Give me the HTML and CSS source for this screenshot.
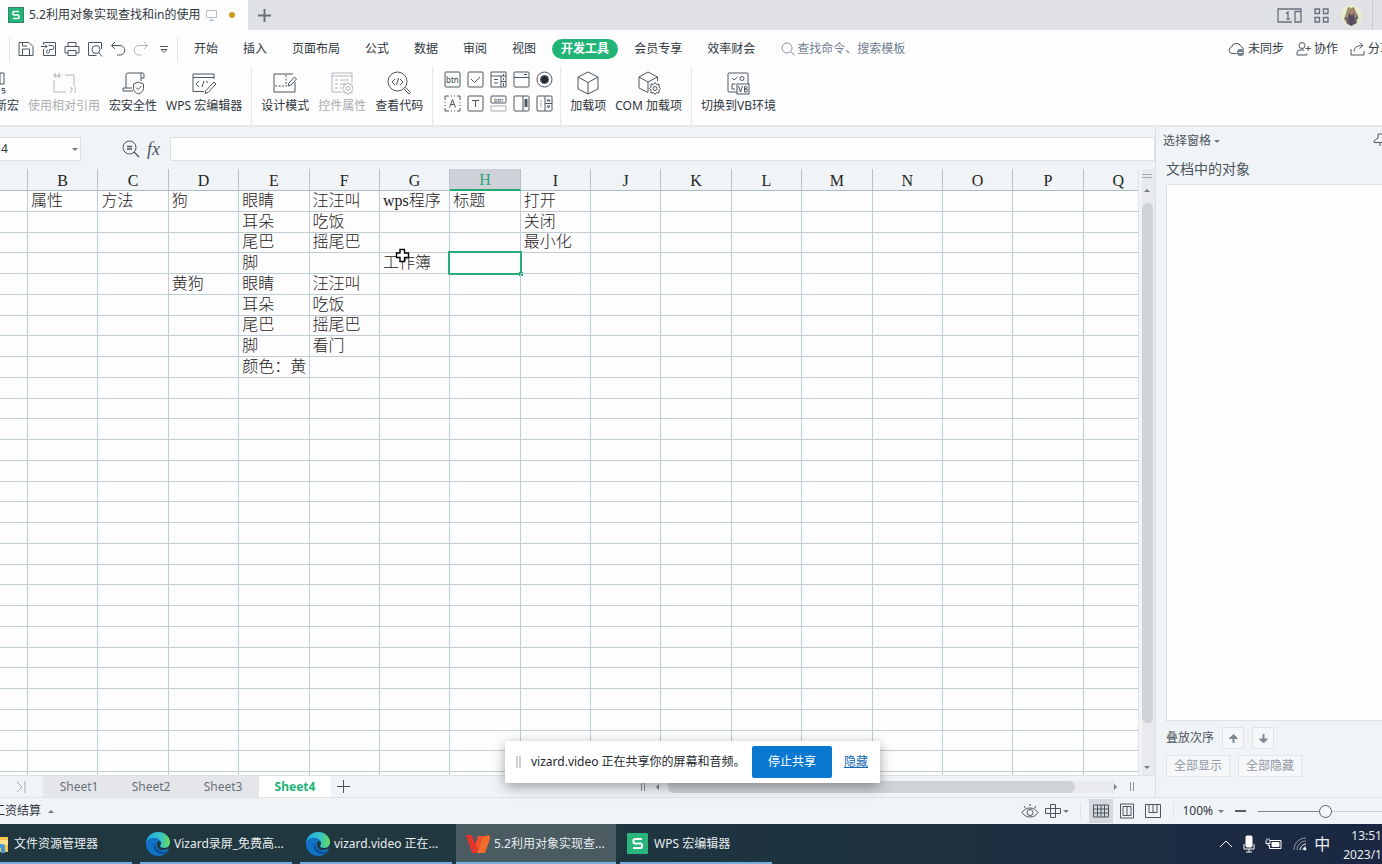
FILE: index.html
```html
<!DOCTYPE html>
<html lang="zh-CN">

<head>
    <meta charset="UTF-8">
    <meta name="viewport" content="width=device-width, initial-scale=1.0">
    <title>5.2利用对象实现查找和in的使用</title>
    <link rel="stylesheet" href="styles.css">
</head>

<body>
    <header class="titlebar">
        <div class="doc-tab">
            <svg width="16" height="16" viewBox="0 0 16 16"><rect width="16" height="16" rx="1" fill="#20b477"/><path d="M11 4.5H6a1 1 0 0 0-1 1V7a1 1 0 0 0 1 1h4a1 1 0 0 1 1 1v1.500a1 1 0 0 1-1 1H5" fill="none" stroke="#fff" stroke-width="1.500"/></svg>
            <span>5.2利用对象实现查找和in的使用</span>
            <svg class="pale" width="13" height="13" viewBox="0 0 13 13"><path d="M1.500 1.500h10v7h-10zM6.500 8.500v3M4 11.500h5"/></svg>
            <i class="dot"></i>
        </div>
        <button class="new-tab" aria-label="新建"><svg width="13" height="13" viewBox="0 0 13 13"><path d="M6.500 0v13M0 6.500h13" stroke-width="2"/></svg></button>
        <div class="title-right">
            <svg width="25" height="15" viewBox="0 0 25 15"><path d="M15 14H1V1h23v13h-6V3.500h5.500M9 5.500l2-1.500v7M9.500 11h3.500" stroke-width="1.300"/></svg>
            <svg width="15" height="15" viewBox="0 0 15 15"><path d="M1 1h4.500v4.500H1zM9.500 1H14v4.500H9.500zM1 9.500h4.500V14H1zM9.500 9.500H14V14H9.500z" stroke-width="1.400"/></svg>
            <svg class="avatar" width="21" height="21" viewBox="0 0 21 21"><circle cx="10.500" cy="10.500" r="10.500" fill="#e9edcf"/><path d="M7 2l3 1 3-1 2 5 2 3-1 8-5 3-5-2-3-5 2-6z" fill="#9b8f6b"/><path d="M8 8h5l1 10-4 3-4-3z" fill="#5a4a63"/><path d="M9 5h3v5H9z" fill="#a87f72"/><path d="M4 13l3 1v5M17 12l-3 2v5" stroke="#655b70" fill="none" stroke-width="2"/></svg>
        </div>
    </header>

    <nav class="menubar">
        <div class="quick">
            <button aria-label="保存"><svg width="16" height="16" viewBox="0 0 16 16"><path d="M1 14.500v-13h10l4 4v9zM4.500 14V8h7v6M4.500 1.500V5H9"/></svg></button>
            <button aria-label="输出为PDF"><svg width="16" height="16" viewBox="0 0 16 16"><path d="M2.500 3.500v-2h12v13h-12V8M0 5.500h6M4 3.500l2 2-2 2M7.500 4.500H11a2 2 0 0 1 0 4H8.500v2a1.500 1.500 0 1 1-1.500-1.500"/></svg></button>
            <button aria-label="打印"><svg width="16" height="16" viewBox="0 0 16 16"><path d="M4 5.500v-4h8v4M4 12H1V5.500h14V12h-3M4 9.500h8v5H4z"/></svg></button>
            <button aria-label="打印预览"><svg width="16" height="16" viewBox="0 0 16 16"><path d="M14.500 8V1.500h-13v13h8"/><circle cx="9" cy="8.500" r="4"/><path d="M11.500 11.500l3.500 4"/></svg></button>
            <button aria-label="撤销"><svg width="16" height="16" viewBox="0 0 16 16"><path d="M5 1L1.500 4.500 5 8M1.500 4.500h8.500a4.700 4.700 0 0 1 0 9.500H7"/></svg></button>
            <button class="off" aria-label="恢复"><svg width="16" height="16" viewBox="0 0 16 16"><path d="M11 1l3.500 3.500L11 8M14.500 4.500H6a4.700 4.700 0 0 0 0 9.500h3"/></svg></button>
            <button aria-label="自定义快速访问"><svg width="16" height="16" viewBox="0 0 16 16"><path d="M4 5.500h8M5 8.500l3 3 3-3z"/></svg></button>
        </div>
        <div class="tabs">
            <button>开始</button>
            <button>插入</button>
            <button>页面布局</button>
            <button>公式</button>
            <button>数据</button>
            <button>审阅</button>
            <button>视图</button>
            <button class="on">开发工具</button>
            <button>会员专享</button>
            <button>效率财会</button>
        </div>
        <label class="search">
            <svg width="14" height="14" viewBox="0 0 14 14"><circle cx="6" cy="6" r="5"/><path d="M9.500 9.500L13.500 13.500"/></svg>
            <input type="text" placeholder="查找命令、搜索模板" aria-label="查找命令">
        </label>
        <div class="share">
            <button><svg width="17" height="16" viewBox="0 0 17 16"><path d="M8.500 12.500H4a3.200 3.200 0 0 1-.5-6.300A5 5 0 0 1 13 5.500a4 4 0 0 1 2.500 3.500"/><circle cx="12.500" cy="11.500" r="3.500" fill="#6b7f92" stroke="none"/><path d="M10.500 11.500h4" stroke="#fff"/></svg>未同步</button>
            <button><svg width="15" height="16" viewBox="0 0 15 16"><circle cx="6" cy="4.500" r="3"/><path d="M11 12.500V14H1v-2a3 3 0 0 1 3-3h4M9.500 7.500H15M12.200 5v5"/></svg>协作</button>
            <button><svg width="15" height="16" viewBox="0 0 15 16"><path d="M1 8v6h13v-4M4 10.500c0-4 3-6 8.500-6M9.500 1.500l3.500 3-3.500 3"/></svg>分享</button>
        </div>
    </nav>

    <section class="ribbon">
        <div class="group">
            <button><svg width="24" height="24" viewBox="0 0 24 24"><path d="M5 15V2h16v11h-4V2M5 13H2v3"/><path d="M9 17l2 5 2-5 2 5 1-5M22 17.500h-3v2h3V22h-3"/></svg>录制新宏</button>
            <button class="off"><svg width="24" height="24" viewBox="0 0 24 24"><path d="M2 9v12h12M13 4h9v11M4 2L2 4v2h2V4H2M8 2L6 4v2h2V4H6M18 17h2v2l-2 3M22 17h2v2l-2 3"/></svg>使用相对引用</button>
            <button><svg width="24" height="24" viewBox="0 0 24 24"><path d="M5 17V4a2 2 0 0 1 2-2h13v5h3V4a2 2 0 0 0-3-2M20 7v3M12 20H2v-3h9"/><path d="M17.500 11l5 2v4.500c0 2.500-2 4-5 5.500-3-1.500-5-3-5-5.500V13zM15 16.500l2 2 3.500-3.500"/></svg>宏安全性</button>
            <button><svg width="24" height="24" viewBox="0 0 24 24"><path d="M12 20.500H1V3h21v5M1 6.500h21M7 10l-3 3 3 3M12 10l-2 6M14 10l2 2"/><path d="M14 19.500L22 11l2 2-8 8.500-3 1z"/></svg>WPS 宏编辑器</button>
        </div>
        <div class="group">
            <button><svg width="24" height="24" viewBox="0 0 24 24"><path d="M20 3H1v18h21v-10"/><path d="M2 15h12M13 4v11" stroke-dasharray="2 1.500"/><path d="M15 15l1-3 5.500-6 2 2-5.500 6z"/></svg>设计模式</button>
            <button class="off"><svg width="24" height="24" viewBox="0 0 24 24"><path d="M12 21H2V2h20v9M2 5h20M5 9h3M5 13h3M5 17h3M10 9h9M10 13h5M10 17h2"/><path d="M18 11.500l1.500 2 2.500-.5v3l1.500 1.500-1.500 1.500v3l-2.500-.5-1.500 2-1.500-2-2.500.5v-3l-1.500-1.500 1.500-1.500v-3l2.500.5z"/><circle cx="18" cy="17.500" r="2"/></svg>控件属性</button>
            <button><svg width="24" height="24" viewBox="0 0 24 24"><circle cx="10.500" cy="10.500" r="9.500"/><path d="M8 8l-3 3 3 3M13 8l3 3-3 3M11.500 7l-2 7M17 18l5 5 1.500-1.500-5-5"/></svg>查看代码</button>
        </div>
        <div class="group controls">
            <button aria-label="命令按钮"><svg width="17" height="17" viewBox="0 0 17 17"><rect x="1" y="1" width="15" height="15" rx="1"/><text x="2" y="12">btn</text></svg></button>
            <button aria-label="复选框"><svg width="17" height="17" viewBox="0 0 17 17"><rect x="1" y="1" width="15" height="15" rx="1"/><path d="M4 8l3.500 3.500L13 6"/></svg></button>
            <button aria-label="列表框"><svg width="17" height="17" viewBox="0 0 17 17"><path d="M1 1h15v15H1zM1 5h15M11 5v11M4 8.500h4M4 12h4M11 10.500h5M13.500 3v2M13.500 7v2M13.500 12v3"/></svg></button>
            <button aria-label="组合框"><svg width="17" height="17" viewBox="0 0 17 17"><rect x="1" y="1" width="15" height="15" rx="1"/><path d="M1 6.500h15M11 3.500h3"/></svg></button>
            <button aria-label="选项按钮"><svg width="17" height="17" viewBox="0 0 17 17"><circle cx="8.500" cy="8.500" r="7.500"/><circle cx="8.500" cy="8.500" r="4" fill="#252b30"/></svg></button>
            <button aria-label="标签"><svg width="17" height="17" viewBox="0 0 17 17"><path d="M1 4V1h3M13 1h3v3M16 13v3h-3M4 16H1v-3"/><path d="M4 1h9M16 4v9M4 16h9M1 4v9" stroke-dasharray="1 2"/><path d="M5.500 12.500l3-8 3 8M6.500 9.500h4"/></svg></button>
            <button aria-label="文本框"><svg width="17" height="17" viewBox="0 0 17 17"><rect x="1" y="1" width="15" height="15" rx="1"/><path d="M5 5.500h7M8.500 5.500V12"/></svg></button>
            <button aria-label="切换按钮"><svg width="17" height="17" viewBox="0 0 17 17"><rect x="1" y="1" width="15" height="7" rx="1"/><path d="M1 11h15v5H1z" stroke="#a9afb4"/><text class="tiny" x="4" y="7">btn</text></svg></button>
            <button aria-label="滚动条"><svg width="17" height="17" viewBox="0 0 17 17"><rect x="1" y="1" width="15" height="15" rx="1"/><path d="M10 1v15"/><path d="M13 4v8" stroke-width="3"/></svg></button>
            <button aria-label="数值调节钮"><svg width="17" height="17" viewBox="0 0 17 17"><rect x="1" y="1" width="15" height="15" rx="1"/><path d="M9 1v15M9 8.500h7M11 6l1.500-2L14 6zM11 11l1.500 2 1.500-2z"/><path d="M5 5v7" stroke="#a9afb4"/></svg></button>
        </div>
        <div class="group">
            <button><svg width="24" height="24" viewBox="0 0 24 24"><path d="M12 1l10 5v12l-10 5-10-5V6zM2 6l10 5.500L22 6M12 11.500V23"/></svg>加载项</button>
            <button><svg width="24" height="24" viewBox="0 0 24 24"><path d="M11 21.500L2 17V6l9-5 9.500 5v4M2 6l9 5 9.500-5M11 11v10"/><path d="M18 11.500l1.500 2 2.500-.5v3l1.500 1.500-1.500 1.500v3l-2.500-.5-1.500 2-1.500-2-2.500.5v-3l-1.500-1.500 1.500-1.500v-3l2.500.5z" fill="#fdfdfe"/><circle cx="18" cy="17.500" r="2"/></svg>COM 加载项</button>
        </div>
        <div class="group">
            <button><svg width="24" height="24" viewBox="0 0 24 24"><rect x="2" y="2" width="20" height="19" rx="1"/><path d="M6 7l2 2 3.500-3M9.500 13H6v5h3"/><circle cx="16" cy="7.500" r="2"/><rect x="11" y="13" width="12" height="10" fill="#fdfdfe"/><path d="M12.500 15l2 6 2-6M18.500 15.500v5.500h1.500a1.500 1.500 0 0 0 0-3h-1.500 1.300a1.200 1.200 0 0 0 0-2.500z"/></svg>切换到VB环境</button>
        </div>
    </section>

    <main class="workspace">
        <section class="book">
            <div class="formula">
                <button class="namebox">H4<i class="caret"></i></button>
                <svg width="18" height="18" viewBox="0 0 18 18"><circle cx="7.500" cy="7.500" r="6.500"/><path d="M12 12l5 5M5 6.500h5M5 9h5" stroke-width="1.400"/></svg>
                <span class="fx">fx</span>
                <input type="text" aria-label="编辑栏">
            </div>
            <div class="sheet">
                <div class="cells">
                    <table>
                        <colgroup><col class="first"></colgroup>
                        <thead><tr id="heads"></tr></thead>
                        <tbody id="rows"></tbody>
                    </table>
                    <svg class="cursor" width="15" height="15" viewBox="0 0 15 15"><path d="M5 1.500h4.500V5h4v4.500h-4v4H5v-4H1.500V5H5z"/></svg>
                </div>
                <div class="vscroll">
                    <i class="split"></i>
                    <i class="caret up"></i>
                    <div class="thumb"></div>
                    <i class="caret"></i>
                </div>
            </div>
            <div class="sheetbar">
                <svg class="last" width="10" height="12" viewBox="0 0 10 12"><path d="M1 1l5 5-5 5M9 0v12"/></svg>
                <button>Sheet1</button>
                <button>Sheet2</button>
                <button>Sheet3</button>
                <button class="on">Sheet4</button>
                <button class="add" aria-label="新建工作表"><svg width="13" height="13" viewBox="0 0 13 13"><path d="M6.500 0v13M0 6.500h13"/></svg></button>
                <div class="hscroll">
                    <i class="grip"></i>
                    <i class="caret left"></i>
                    <div class="track"><div class="thumb"></div></div>
                    <i class="caret right"></i>
                    <i class="grip"></i>
                </div>
            </div>
        </section>

        <aside class="pane">
            <div class="pane-head">
                <button>选择窗格<i class="caret"></i></button>
                <svg width="14" height="14" viewBox="0 0 14 14"><path d="M5 1h7v7h1.500v1.500H1V8l4-3zM7 9.500V13"/></svg>
            </div>
            <h2>文档中的对象</h2>
            <div class="objects"></div>
            <div class="order">
                <span>叠放次序</span>
                <button aria-label="上移"><svg width="11" height="11" viewBox="0 0 11 11"><path d="M5.500 10V3" stroke-width="2"/><path d="M1.500 5.500l4-4 4 4z" class="solid"/></svg></button>
                <button aria-label="下移"><svg width="11" height="11" viewBox="0 0 11 11"><path d="M5.500 1v7" stroke-width="2"/><path d="M1.500 6l4 4 4-4z" class="solid"/></svg></button>
            </div>
            <div class="all">
                <button>全部显示</button>
                <button>全部隐藏</button>
            </div>
        </aside>
    </main>

    <div class="status">
        <button class="calc">工资结算<i class="caret up"></i></button>
        <div class="views">
            <svg width="18" height="16" viewBox="0 0 18 16"><path d="M1 9.500c3.500-6 12.500-6 16 0-3.500 6-12.500 6-16 0zM3 3l1.500 2M9 1v2M15 3l-1.500 2"/><circle cx="9" cy="9.500" r="3"/></svg>
            <svg width="18" height="16" viewBox="0 0 18 16"><path d="M6.500 1.500h5v13h-5zM1.500 5.500h15v5h-15z"/></svg>
            <i class="caret"></i>
            <i class="bar"></i>
            <button class="on grid" aria-label="普通视图"><svg width="18" height="16" viewBox="0 0 18 16"><path d="M1.500 2h15v12h-15zM1.500 6h15M1.500 10h15M5.500 2v12M9 2v12M12.500 2v12"/></svg></button>
            <button aria-label="分页预览"><svg width="18" height="16" viewBox="0 0 18 16"><path d="M2.500 1h13v14h-13zM5 3.500h8v9H5zM9 3.500v9"/></svg></button>
            <button aria-label="页面布局"><svg width="18" height="16" viewBox="0 0 18 16"><path d="M1.500 1.500h15v13h-15zM5 1.500v8h8v-8M9 1.500v8"/></svg></button>
            <i class="bar"></i>
            <button class="zoom">100%<i class="caret"></i></button>
            <button class="minus" aria-label="缩小"></button>
            <input type="range" min="0" max="100" value="48" aria-label="缩放">
        </div>
    </div>

    <footer class="taskbar">
        <button><svg width="24" height="24" viewBox="0 0 24 24"><path d="M0 3h10l2 2h10v15H0z" fill="#f5c54c"/><path d="M0 8h22v5H0z" fill="#ffe08a"/><path d="M4 20v-5a3 3 0 0 1 3-3h9a3 3 0 0 1 3 3v6h-4v-5H8v5z" fill="#3f9ad6"/></svg><span>文件资源管理器</span></button>
        <button><svg width="24" height="24" viewBox="0 0 24 24"><use href="#edge"/></svg><span>Vizard录屏_免费高...</span></button>
        <button><svg width="24" height="24" viewBox="0 0 24 24"><use href="#edge"/></svg><span>vizard.video 正在...</span></button>
        <button class="on"><svg width="24" height="24" viewBox="0 0 24 24"><path d="M0 3h6l3 9 3-8h5L11 21H6z" fill="#e0342d"/><path d="M11 21L17 4h2c4-2 6 0 5 3l-5 14h-5l4-11-4 11z" fill="#f26a2c"/><path d="M12 4h5l-5 14-2-5z" fill="#f0522a"/></svg><span>5.2利用对象实现查...</span></button>
        <button><svg width="24" height="24" viewBox="0 0 24 24"><rect x="1" y="1" width="21" height="21" rx="1" fill="#28b67c"/><path d="M16 7H9a1.500 1.500 0 0 0-1.500 1.500v1.500a1.500 1.500 0 0 0 1.500 1.500h5.500A1.500 1.500 0 0 1 16 13v1.500a1.500 1.500 0 0 1-1.500 1.500H7" fill="none" stroke="#fff" stroke-width="2"/></svg><span>WPS 宏编辑器</span></button>
        <div class="tray">
            <svg width="14" height="16" viewBox="0 0 14 16"><path d="M1 11l6-6 6 6"/></svg>
            <svg width="12" height="18" viewBox="0 0 12 18"><rect x="3" y="1" width="6" height="11" rx="1" fill="#fff"/><path d="M1 9v5h10V9M6 14v3M3 17h6"/></svg>
            <svg width="18" height="16" viewBox="0 0 18 16"><path d="M5 4.500h11v8H4.500V9M1 4.500v3h4v-3M2 2.500v2M4 2.500v2M3 7.500v2h1.500"/><path d="M7 6.500h7v4H7z" fill="#fff"/></svg>
            <svg width="14" height="16" viewBox="0 0 14 16"><path d="M1 14C1 7 6 2 13 2M4 14c0-5 4-9 9-9" opacity=".5"/><path d="M7 14c0-3 3-6 6-6M10 14c0-2 1-3 3-3"/><circle cx="12" cy="13" r="1" fill="#fff"/></svg>
            <span class="ime">中</span>
        </div>
        <div class="clock"><time>13:51</time><span>2023/1</span></div>
    </footer>

    <div class="sharing" role="dialog" aria-label="共享">
        <i class="drag"></i>
        <span>vizard.video 正在共享你的屏幕和音频。</span>
        <button>停止共享</button>
        <a href="#">隐藏</a>
    </div>

    <svg class="defs" width="0" height="0">
        <defs>
            <linearGradient id="sea" x1="0" y1="0" x2="1" y2="0"><stop offset="0" stop-color="#1f9ee0"/><stop offset=".6" stop-color="#35c3c8"/><stop offset="1" stop-color="#6bdc52"/></linearGradient>
            <symbol id="edge" viewBox="0 0 24 24">
                <circle cx="12" cy="12" r="12" fill="#1272c4"/>
                <path d="M0 11C1 4 6 0 12 0c7 0 12 5 12 10 0 4-3 6-6 6-3 0-4-1-4-2s1-1 1-3c0-3-3-5-7-5-4 0-7 2-8 5z" fill="url(#sea)"/>
                <path d="M9 11c-3 4 0 11 7 11 3 0 5-1 6-3-5 2-13 0-13-8z" fill="#0d4f9e"/>
                <path d="M12 9c-2 2-2 9 5 9 3 0 4-1 5-1 1 0 2-1 2 0V12c-1 3-3 4-6 4-3 0-4-1-4-2s1-1 1-3c0-1-1-2-3-2z" fill="#20373f"/>
            </symbol>
        </defs>
    </svg>

    <script>
        const cols = ["", "B", "C", "D", "E", "F", "G", "H", "I", "J", "K", "L", "M", "N", "O", "P", "Q"];
        const data = [
            { B: "属性", C: "方法", D: "狗", E: "眼睛", F: "汪汪叫", G: "wps程序", H: "标题", I: "打开" },
            { E: "耳朵", F: "吃饭", I: "关闭" },
            { E: "尾巴", F: "摇尾巴", I: "最小化" },
            { E: "脚", G: "工作簿" },
            { D: "黄狗", E: "眼睛", F: "汪汪叫" },
            { E: "耳朵", F: "吃饭" },
            { E: "尾巴", F: "摇尾巴" },
            { E: "脚", F: "看门" },
            { E: "颜色：黄" }
        ];

        // 表头
        document.getElementById("heads").innerHTML = cols.map(c => `<th${c === "H" ? ' class="on"' : ""}>${c}</th>`).join("");

        // 单元格
        let html = "";
        for (let r = 0; r < 29; r++) {
            const row = data[r] || {};
            html += "<tr>" + cols.map(c => `<td${c === "H" && r === 3 ? ' class="picked"' : ""}>${row[c] || ""}</td>`).join("") + "</tr>";
        }
        document.getElementById("rows").innerHTML = html;
    </script>
</body>

</html>
```
FILE: styles.css
```css
* {
    box-sizing: border-box;
    padding: 0;
    margin: 0;
}

body {
    display: flex;
    flex-direction: column;
    height: 100vh;
    overflow: hidden;
    font: 12px/16px "Noto Sans", "Noto Sans CJK SC", sans-serif;
    color: #30373d;
    background: #f0f4f6;
}

button,
input {
    font: inherit;
    color: inherit;
    border: 0;
    background: transparent;
    white-space: nowrap;
}

svg {
    flex: none;
    fill: none;
    stroke: #4d565e;
}

.defs {
    position: absolute;
}

.caret {
    flex: none;
    border: 3px solid transparent;
    border-top-color: #737c84;
    border-bottom: 0;
}

.caret.up {
    border: 3px solid transparent;
    border-bottom-color: #737c84;
    border-top: 0;
}

.caret.left {
    border: 3px solid transparent;
    border-right-color: #737c84;
    border-left: 0;
}

.caret.right {
    border: 3px solid transparent;
    border-left-color: #737c84;
    border-right: 0;
}

/* 标题栏 */
.titlebar {
    display: flex;
    flex: none;
    align-items: center;
    height: 30px;
    background: #e0e1e5;
}

.doc-tab {
    display: flex;
    align-items: center;
    width: 248px;
    height: 30px;
    padding: 0 13px 0 8px;
    gap: 5px;
    background: #fdfdfe;
    white-space: nowrap;
}

.pale {
    stroke: #b9bfc6;
}

.dot {
    width: 6px;
    height: 6px;
    margin-left: auto;
    border-radius: 50%;
    background: #d39b1e;
}

.new-tab {
    height: 13px;
    margin-left: 10px;
}

.new-tab svg,
.title-right svg {
    display: block;
    stroke: #68727f;
}

.title-right {
    display: flex;
    align-items: center;
    height: 30px;
    gap: 12px;
    margin-left: auto;
    margin-right: 9px;
    padding-right: 10px;
    border-right: 1px solid #c9cbd0;
}

.title-right .avatar {
    stroke: none;
}

/* 菜单栏 */
.menubar {
    display: flex;
    flex: none;
    align-items: center;
    height: 37px;
    background: #fdfdfe;
}

.quick {
    display: flex;
    gap: 7px;
    margin-left: 9px;
    padding: 5px 5px 5px 8px;
    border: 1px solid #e3e4e8;
    border-width: 0 1px;
}

.quick button,
.quick svg {
    display: block;
}

.off {
    color: #a9aeb2;
}

.off svg {
    stroke: #b1b6ba;
}

.tabs {
    display: flex;
    gap: 7px;
    margin-left: 7px;
}

.tabs button {
    height: 20px;
    padding: 0 9px;
    border-radius: 10px;
}

.tabs .on {
    color: #fff;
    font-weight: bold;
    background: #22b376;
}

.search {
    display: flex;
    align-items: center;
    gap: 2px;
    margin-left: 17px;
}

.search svg {
    stroke: #8b96a5;
}

.search input {
    width: 120px;
    outline: 0;
}

.search input::placeholder {
    color: #738092;
    opacity: 1;
}

.share {
    display: flex;
    gap: 12px;
    margin-left: auto;
    margin-right: -10px;
}

.share button {
    display: flex;
    align-items: center;
    gap: 3px;
}

/* 功能区 */
.ribbon {
    display: flex;
    flex: none;
    height: 60px;
    margin-left: -38px;
    background: #fdfdfe;
    border-bottom: 2px solid #e6e9eb;
}

.group {
    display: flex;
    align-items: flex-start;
    gap: 9px;
    padding: 4px 9px 0;
    border-right: 1px solid #e6e7ea;
}

.group:last-child {
    border: 0;
}

.group button {
    display: flex;
    flex-direction: column;
    align-items: center;
    gap: 3px;
}

.controls {
    display: grid;
    grid-template-columns: repeat(5, 17px);
    gap: 7px 6px;
    align-content: start;
    padding: 4px 7px 0 11px;
}

.controls text {
    fill: #343b41;
    stroke: none;
    font-size: 8px;
}

.controls .tiny {
    font-size: 6px;
}

/* 表格区 */
.workspace {
    display: flex;
    flex: 1;
    min-height: 0;
}

.book {
    display: flex;
    flex: 1;
    flex-direction: column;
    min-width: 0;
}

.formula {
    display: flex;
    flex: none;
    align-items: center;
    height: 42px;
    padding-top: 2px;
}

.formula .namebox {
    display: flex;
    align-items: center;
    justify-content: space-between;
    width: 90px;
    height: 24px;
    margin-left: -9px;
    margin-right: 41px;
    padding-right: 2px;
    border: 1px solid #dce1e4;
    background: #fdfdfe;
}

.fx {
    width: 30px;
    padding-left: 7px;
    font: italic 18px/20px "Liberation Serif", serif;
    color: #4d565e;
}

.formula input {
    flex: 1;
    height: 24px;
    border: 1px solid #dce1e4;
    background: #fdfdfe;
    outline: 0;
}

.sheet {
    display: flex;
    flex: 1;
    min-height: 0;
}

.cells {
    position: relative;
    flex: 1;
    overflow: hidden;
    background: #fdfdfe;
}

.cells table {
    table-layout: fixed;
    width: calc(100% + 16px);
    height: calc(100% + 18px);
    border-spacing: 0;
    font: 16px/18px "Liberation Serif", "Noto Sans CJK SC", serif;
    font-weight: 300;
    color: #1f2322;
}

.first {
    width: 28px;
}

.cells th {
    height: 21px;
    padding-top: 2px;
    font-weight: normal;
    background: #f0f4f6;
    border-right: 1px solid #b7c2c8;
    border-bottom: 1px solid #a9bcc2;
}

.cells th.on {
    color: #2aa876;
    background: #ced1d8;
    border-bottom: 2px solid #22a873;
}

.cells td {
    position: relative;
    height: 20px;
    padding-left: 3px;
    white-space: nowrap;
    border: 1px solid #bfced4;
    border-width: 0 1px 1px 0;
}

/* 选中的单元格 */
.picked::before {
    content: "";
    position: absolute;
    inset: -2px;
    border: 2px solid #26ac77;
}

.picked::after {
    content: "";
    position: absolute;
    right: -3px;
    bottom: -3px;
    width: 4px;
    height: 4px;
    background: #26ac77;
}

.cursor {
    position: absolute;
    left: 395px;
    top: 79px;
    fill: #fff;
    stroke: #000;
    stroke-width: 1.4;
}

.vscroll {
    display: flex;
    flex-direction: column;
    align-items: center;
    width: 17px;
    padding-bottom: 6px;
    border-left: 1px solid #e0e4e6;
    background: linear-gradient(90deg, #f0f4f6 3px, #e8eaed 3px);
}

.split {
    width: 10px;
    height: 4px;
    margin: 5px 0 11px;
    border: 1px solid #a1a8ae;
    border-width: 1px 0;
}

.vscroll .thumb {
    flex: 1;
    width: 11px;
    margin: 11px 0 43px;
    border-radius: 6px;
    background: #cfd2d7;
}

.sheetbar {
    display: flex;
    flex: none;
    align-items: center;
    height: 23px;
    border: 1px solid #dde2e5;
    border-width: 1px 0;
}

.last {
    margin: 0 17px 0 16px;
    stroke: #a3abb1;
}

.sheetbar button {
    width: 72px;
    height: 21px;
    color: #66707a;
    background: #e5e6ea;
}

.sheetbar .on {
    font-weight: bold;
    color: #22b376;
    background: #fff;
}

.sheetbar .add {
    display: flex;
    align-items: center;
    justify-content: center;
    width: 24px;
    background: none;
}

.hscroll {
    display: flex;
    align-items: center;
    flex: 1;
    max-width: 493px;
    margin-left: auto;
    margin-right: 21px;
}

.grip {
    width: 4px;
    height: 9px;
    border: 1px solid #8c959b;
    border-width: 0 1px;
}

.hscroll .left {
    margin: 0 9px 0 11px;
}

.hscroll .right {
    margin: 0 13px 0 0;
}

.track {
    flex: 1;
    padding-right: 39px;
    background: #e8eaed;
}

.hscroll .thumb {
    height: 12px;
    border-radius: 6px;
    background: #cfd2d7;
}

/* 选择窗格 */
.pane {
    display: flex;
    flex-direction: column;
    width: 227px;
    padding: 6px 0 20px 10px;
    border-left: 1px solid #d9dfe2;
    border-bottom: 1px solid #dde2e5;
    color: #4b545d;
}

.pane-head {
    display: flex;
    justify-content: space-between;
    margin-right: -5px;
    margin-left: -3px;
}

.pane-head button,
.zoom,
.calc {
    display: flex;
    align-items: center;
    gap: 3px;
}

.pane h2 {
    margin: 10px 0 5px;
    font-size: 14px;
    line-height: 20px;
    font-weight: normal;
}

.objects {
    flex: 1;
    border: 1px solid #dce1e4;
    border-right: 0;
    background: #fdfdfe;
}

.order,
.all {
    display: flex;
    align-items: center;
    gap: 8px;
    margin-top: 6px;
}

.order button,
.all button {
    height: 22px;
    border: 1px solid #e1e5e8;
    background: #f5f7f9;
}

.order button {
    display: flex;
    align-items: center;
    justify-content: center;
    width: 22px;
}

.order svg {
    stroke: #818a93;
}

.order .solid {
    fill: #818a93;
}

.all button {
    padding: 0 7px;
    color: #9299a3;
}

/* 状态栏 */
.status {
    display: flex;
    flex: none;
    align-items: center;
    height: 26px;
}

.calc {
    margin-left: -7px;
    gap: 7px;
}

.views {
    display: flex;
    align-items: center;
    margin-left: auto;
    margin-right: -16px;
    gap: 5px;
}

.views > .caret {
    margin-left: -4px;
}

.bar {
    width: 1px;
    height: 16px;
    margin-left: 6px;
    background: #dfe4e7;
}

.views button svg {
    display: block;
}

.views .on {
    padding: 4px 3px;
    background: #d5d9de;
}

.views .grid {
    width: 24px;
    margin-left: 3px;
    margin-right: -3px;
}

.views button + button {
    margin-left: 3px;
}

.views .zoom {
    margin-left: 3px;
    gap: 5px;
}

.views .minus {
    width: 11px;
    height: 2px;
    margin: 0 7px 0 6px;
    background: #545d65;
}

.views input {
    appearance: none;
    width: 140px;
    height: 14px;
    background: linear-gradient(90deg, #7d868d 68px, #cbd1d5 68px) center / 100% 1px no-repeat;
}

.views input::-webkit-slider-thumb {
    appearance: none;
    width: 13px;
    height: 13px;
    border: 1px solid #59626a;
    border-radius: 50%;
    background: #f5f8f9;
}

/* 任务栏 */
.taskbar {
    display: flex;
    flex: none;
    height: 40px;
    margin-left: -24px;
    color: #e8edef;
    background: linear-gradient(90deg, #20373f 40%, #1c3040 70%, #1b2742);
}

.taskbar button {
    display: flex;
    flex: none;
    align-items: center;
    gap: 4px;
    width: 160px;
    padding-left: 10px;
    background: linear-gradient(#76aee0, #76aee0) center bottom / 152px 2px no-repeat;
}

.taskbar .on {
    background: linear-gradient(#76aee0, #76aee0) center bottom / 100% 2px no-repeat #4a5b62;
}

.taskbar button svg {
    stroke: none;
}

.tray {
    display: flex;
    align-items: center;
    gap: 10px;
    margin-left: auto;
    margin-right: 13px;
}

.tray svg {
    stroke: #fff;
}

.ime {
    margin-left: -3px;
    font-size: 16px;
    line-height: 20px;
}

.clock {
    display: flex;
    flex-direction: column;
    align-items: flex-end;
    padding-top: 2px;
    line-height: 19px;
}

/* 共享提示条 */
.sharing {
    position: absolute;
    left: calc(50% - 186px);
    bottom: 81px;
    display: flex;
    align-items: center;
    width: 375px;
    height: 42px;
    padding: 0 12px 0 11px;
    color: #23282c;
    background: #fff;
    box-shadow: 0 4px 12px rgba(0, 0, 0, 0.35);
    white-space: nowrap;
}

.drag {
    width: 5px;
    height: 12px;
    margin-right: 10px;
    border: 2px solid #d0cfd3;
    border-width: 0 2px;
}

.sharing button {
    width: 80px;
    height: 32px;
    margin-left: auto;
    margin-right: 12px;
    border-radius: 2px;
    color: #fff;
    background: #0a78d1;
}

.sharing a {
    color: #1468b3;
}
```
